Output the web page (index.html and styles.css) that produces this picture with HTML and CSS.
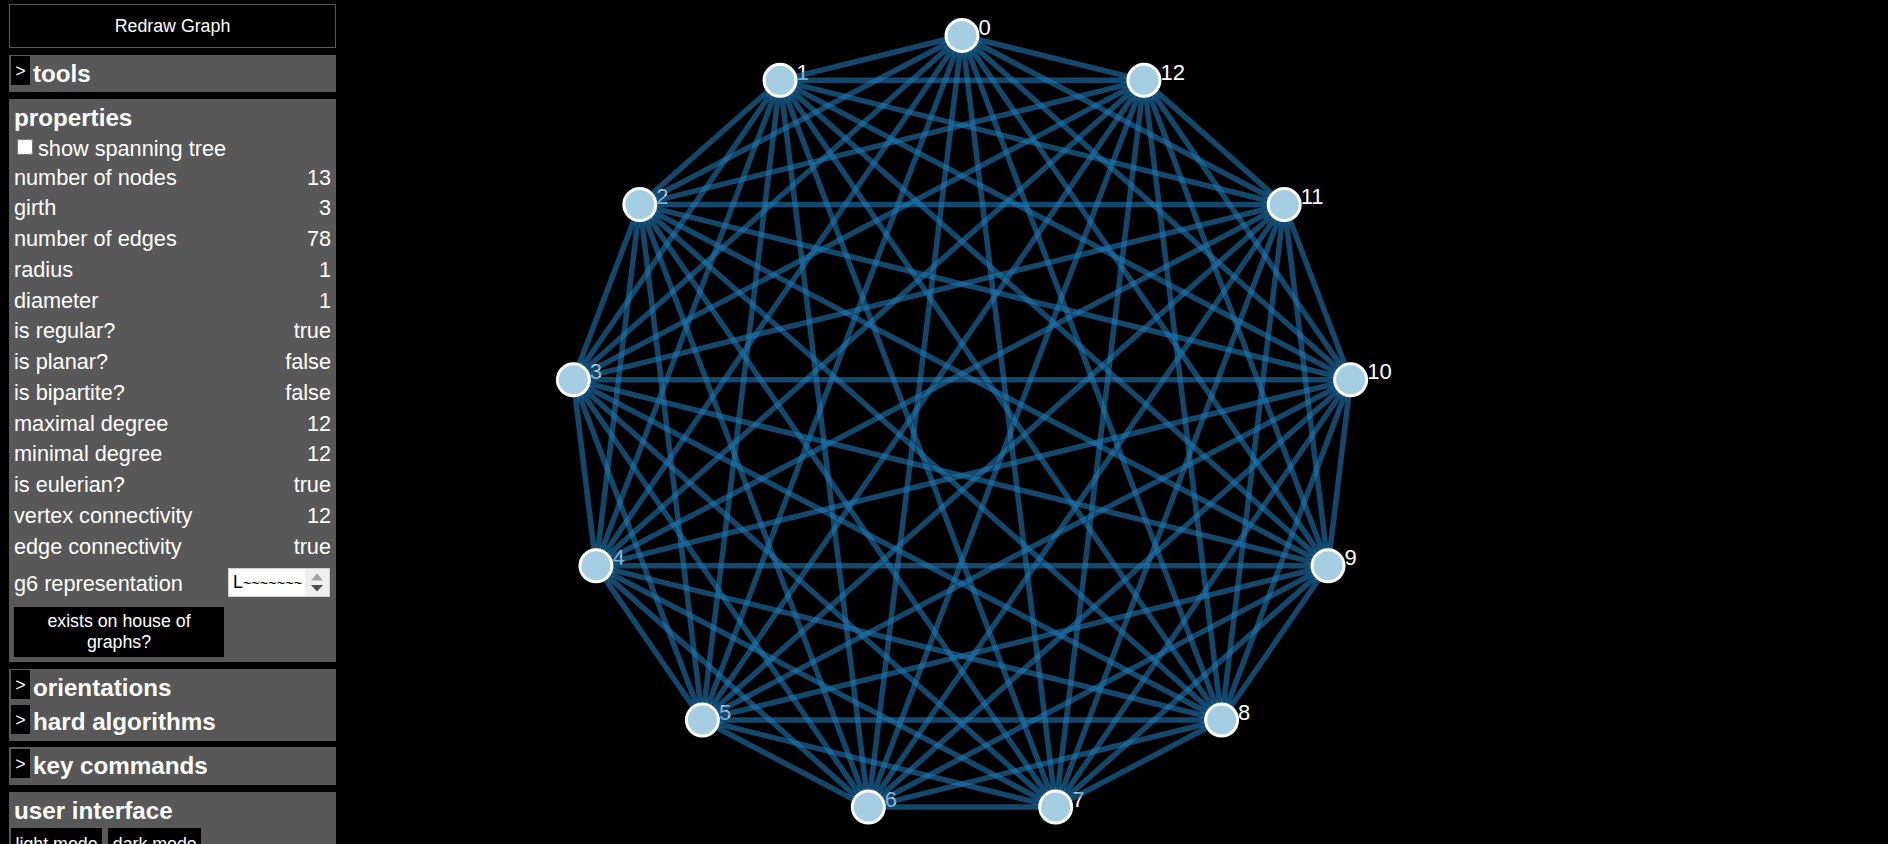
FILE: index.html
```html
<!DOCTYPE html>
<html lang="en">
<head>
<meta charset="utf-8">
<title>Graph</title>
<link rel="stylesheet" href="styles.css">
</head>
<body>
<div class="app">
  <aside class="sidebar">
    <button class="redraw" type="button">Redraw Graph</button>
    <section class="panel panel-collapsed">
      <div class="toggle-row"><button class="caret" type="button">&gt;</button><h2 class="title title-low">tools</h2></div>
    </section>
    <section class="panel panel-props">
      <h2 class="title">properties</h2>
      <label class="check-row"><input type="checkbox" class="check"><span>show spanning tree</span></label>
      <div class="row"><span>number of nodes</span><span>13</span></div>
      <div class="row"><span>girth</span><span>3</span></div>
      <div class="row"><span>number of edges</span><span>78</span></div>
      <div class="row"><span>radius</span><span>1</span></div>
      <div class="row"><span>diameter</span><span>1</span></div>
      <div class="row"><span>is regular?</span><span>true</span></div>
      <div class="row"><span>is planar?</span><span>false</span></div>
      <div class="row"><span>is bipartite?</span><span>false</span></div>
      <div class="row"><span>maximal degree</span><span>12</span></div>
      <div class="row"><span>minimal degree</span><span>12</span></div>
      <div class="row"><span>is eulerian?</span><span>true</span></div>
      <div class="row"><span>vertex connectivity</span><span>12</span></div>
      <div class="row"><span>edge connectivity</span><span>true</span></div>
      <div class="row row-g6">
        <span>g6 representation</span>
        <div class="g6-box">
          <span class="g6-value">L<span class="g6-tildes">~~~~~~~</span></span>
          <span class="g6-spin">
            <svg width="24" height="27" viewBox="0 0 24 27"><path class="spin-up" d="M6 11.5 12 4.5 18 11.5Z"/><path class="spin-down" d="M6 16 18 16 12 22.5Z"/></svg>
          </span>
        </div>
      </div>
      <button class="hog" type="button">exists on house of graphs?</button>
    </section>
    <section class="panel panel-double">
      <div class="toggle-row"><button class="caret" type="button">&gt;</button><h2 class="title title-low">orientations</h2></div>
      <div class="toggle-row"><button class="caret" type="button">&gt;</button><h2 class="title">hard algorithms</h2></div>
    </section>
    <section class="panel panel-key">
      <div class="toggle-row"><button class="caret" type="button">&gt;</button><h2 class="title">key commands</h2></div>
    </section>
    <section class="panel panel-ui">
      <h2 class="title">user interface</h2>
      <div class="mode-row">
        <button class="mode" type="button">light mode</button>
        <button class="mode" type="button">dark mode</button>
      </div>
    </section>
  </aside>
  <svg id="graph" class="graph" viewBox="345 0 1543 844" aria-label="Complete graph on 13 nodes"></svg>
</div>
<script src="graph.js"></script>
</body>
</html>
```
FILE: styles.css
```css
* { box-sizing: border-box; }
html, body { margin: 0; height: 100%; overflow: hidden; background: #000; }
body { font-family: "Liberation Sans", Arial, sans-serif; color: #fff; }
.app { display: flex; height: 844px; overflow: hidden; }
.sidebar { flex: 0 0 327px; width: 327px; margin: 0 9px; padding-top: 4px; display: flex; flex-direction: column; height: 844px; overflow: hidden; }
button { font-family: inherit; color: #fff; background: #000; border: 0; padding: 0; margin: 0; }
.redraw { flex: none; height: 44px; font-size: 17.78px; border: 1.33px solid #595959; margin-bottom: 7px; }
.panel { flex: none; background: #585858; margin-bottom: 7px; }
.title { margin: 0; font-size: 24.2px; line-height: 32px; font-weight: 700; }
.panel-collapsed { height: 37px; padding: 1px 2px 0; }
.panel-double { height: 72px; padding: 1px 2px 0; margin-bottom: 6px; }
.panel-key { height: 38px; padding: 2px 2px 0; }
.toggle-row { display: flex; height: 35px; align-items: flex-start; }
.toggle-row .title { margin-left: 3px; margin-top: 1px; }
.toggle-row .title-low { margin-top: 2px; }
.caret { width: 19px; height: 29px; font-size: 17.78px; line-height: 20px; display: block; text-align: center; padding: 0; }
.panel-props { height: 563px; padding: 3px 5px 0; }
.panel-ui { padding: 3px 2px 0; height: 80px; }
.panel-props .title { line-height: 32.7px; }
.panel-ui .title { padding-left: 3px; }
.check-row { display: flex; align-items: center; height: 28px; font-size: 21.7px; line-height: 24px; padding-left: 3px; }
.check { width: 16px; height: 16px; margin: 0 5px 3px 0; flex: none; }
.row { display: flex; justify-content: space-between; height: 30.75px; line-height: 30.75px; font-size: 21.7px; }
.row-g6 { height: 38px; line-height: 39px; margin-top: 1.6px; align-items: flex-start; }
.g6-box { display: flex; width: 102px; height: 29px; margin: 4px 1px 0 0; background: #fff; border: 1px solid #cfcfcf; color: #000; line-height: 27px; overflow: hidden; }
.g6-value { flex: 1; font-size: 17.78px; padding-left: 4px; overflow: hidden; white-space: nowrap; }
.g6-tildes { font-size: 14.5px; }
.g6-spin { flex: none; width: 24px; background: #f0f0f0; }
.g6-spin svg { display: block; }
.spin-up { fill: #a3a3a3; }
.spin-down { fill: #505050; }
.hog { display: block; width: 210px; height: 50px; font-size: 17.78px; line-height: 21.33px; margin-top: 5px; padding: 0 24px; }
.mode-row { display: flex; gap: 6px; margin-top: 1px; }
.mode { height: 32px; font-size: 17.78px; padding: 0 4.6px; }
.graph { flex: 0 0 1543px; width: 1543px; height: 844px; display: block; }
.edge { stroke: #1f78b4; stroke-width: 5.5px; stroke-opacity: 0.6; }
.node { fill: #a6cee3; stroke: #fff; stroke-width: 3px; }
.label { fill: #fff; font-size: 22px; font-family: "Liberation Sans", Arial, sans-serif; }
```
FILE: graph.js
```js
(function () {
  var NS = 'http://www.w3.org/2000/svg';
  var svg = document.getElementById('graph');
  var N = 13, CX = 962, CY = 427, R = 391.5;
  function make(name, attrs, text) {
    var el = document.createElementNS(NS, name);
    for (var k in attrs) el.setAttribute(k, attrs[k]);
    if (text !== undefined) el.textContent = text;
    svg.appendChild(el);
    return el;
  }
  var pts = [];
  for (var i = 0; i < N; i++) {
    var a = 2 * Math.PI * i / N;
    pts.push({ x: CX - R * Math.sin(a), y: CY - R * Math.cos(a) });
  }
  pts.forEach(function (p, i) {
    make('text', { 'class': 'label', x: (p.x + 16.5).toFixed(2), y: (p.y - 0.5).toFixed(2) }, String(i));
  });
  for (var s = 0; s < N; s++) {
    for (var t = s + 1; t < N; t++) {
      make('line', { 'class': 'edge', x1: pts[s].x.toFixed(2), y1: pts[s].y.toFixed(2), x2: pts[t].x.toFixed(2), y2: pts[t].y.toFixed(2) });
    }
  }
  pts.forEach(function (p) {
    make('circle', { 'class': 'node', cx: p.x.toFixed(2), cy: p.y.toFixed(2), r: 16 });
  });
})();
```
